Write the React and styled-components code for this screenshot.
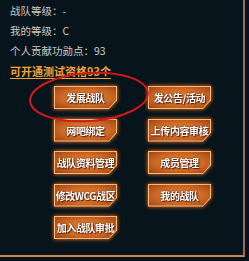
import React from "react";
import styled, { createGlobalStyle } from "styled-components";

const GlobalStyle = createGlobalStyle`
  html, body {
    margin: 0;
    padding: 0;
    background: #06121a;
  }
`;

const infoLines = ["战队等级：-", "我的等级：C", "个人贡献功勋点：93"];

const buttons = [
  "发展战队",
  "发公告/活动",
  "网吧绑定",
  "上传内容审核",
  "战队资料管理",
  "成员管理",
  "修改WCG战区",
  "我的战队",
  "加入战队审批",
];

const App = () => {
  return (
    <Page>
      <GlobalStyle />
      <Panel>
        <Info>
          {infoLines.map((t) => (
            <Line key={t}>{t}</Line>
          ))}
          <Highlight>可开通测试资格93个</Highlight>
        </Info>

        <Grid>
          {buttons.map((b) => (
            <Glow key={b}>
              <Face>
                <Inner>{b}</Inner>
              </Face>
            </Glow>
          ))}
        </Grid>

        <Ring viewBox="0 0 124 54" width="124" height="54">
          <ellipse
            cx="62"
            cy="27"
            rx="59"
            ry="24"
            fill="none"
            stroke="#d01a1a"
            strokeWidth="2"
            transform="rotate(-4 62 27)"
          />
        </Ring>
      </Panel>
    </Page>
  );
};
export default App;

const Page = styled.div`
  width: 249px;
  height: 261px;
  background: #06121a;
  overflow: hidden;
`;

const Panel = styled.div`
  position: relative;
  width: 245px;
  height: 257px;
  box-sizing: border-box;
  border-right: 2px solid #9c6a56;
  border-bottom: 2px solid #c9874c;
  background: #07141b;
`;

const Info = styled.div`
  display: flex;
  flex-direction: column;
  padding: 1px 0 0 10px;
  font-family: "Noto Sans CJK SC", "DejaVu Sans", sans-serif;
  font-size: 10.5px;
  color: #cfcac0;
`;

const Line = styled.div`
  height: 20px;
  line-height: 20px;
`;

const Highlight = styled.div`
  height: 20px;
  line-height: 20px;
  font-weight: bold;
  font-size: 11px;
  color: #f2a23a;
  text-decoration: underline;
  text-underline-offset: 2px;
`;

const Grid = styled.div`
  display: grid;
  grid-template-columns: 63px 63px;
  column-gap: 31px;
  row-gap: 9.5px;
  padding: 5px 0 0 54px;
`;

const Glow = styled.div`
  height: 23px;
  filter: drop-shadow(0 0 2px #ff7a1c);
`;

const Face = styled.div`
  height: 100%;
  padding: 1px;
  box-sizing: border-box;
  background: #ffb878;
  clip-path: polygon(0 0, 100% 0, 100% 62%, calc(100% - 8px) 100%, 0 100%);
`;

const Inner = styled.div`
  height: 100%;
  display: flex;
  align-items: center;
  justify-content: center;
  background: radial-gradient(ellipse at 50% 50%, #e4823a 0%, #cf6a26 55%, #9c4416 100%);
  clip-path: polygon(0 0, 100% 0, 100% 62%, calc(100% - 7px) 100%, 0 100%);
  font-family: "Noto Sans CJK SC", "DejaVu Sans", sans-serif;
  font-weight: bold;
  font-size: 10px;
  color: #ffffff;
  white-space: nowrap;
  letter-spacing: -0.4px;
  text-shadow: 0 0 2px #4a1a04, 1px 1px 1px #5a2206;
`;

const Ring = styled.svg`
  position: absolute;
  left: 27px;
  top: 70px;
  pointer-events: none;
`;
